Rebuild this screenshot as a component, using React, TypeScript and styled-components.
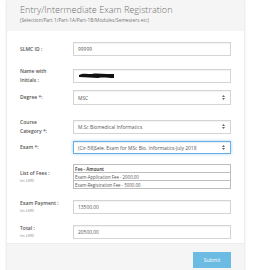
import React from "react";
import styled, { createGlobalStyle } from "styled-components";

const Global = createGlobalStyle`
  html, body { margin: 0; padding: 0; background: #ffffff; }
  body { font-family: "Open Sans", "Liberation Sans", sans-serif; overflow: hidden; }
  * { box-sizing: border-box; }
`;

const Card = styled.div`
  margin-left: 7px;
  width: 237px;
  height: 280px;
  background: #fff;
  box-shadow: 0 0 3px rgba(0, 0, 0, 0.18);
  display: flex;
  flex-direction: column;
`;

const Header = styled.div`
  background: #f5f5f5;
  height: 31px;
  padding: 4px 13px 0 13px;
`;

const Title = styled.div`
  font-size: 9.1px;
  font-weight: 300;
  color: #6f6f6f;
  line-height: 12px;
  white-space: nowrap;
`;

const Subtitle = styled.div`
  font-size: 4.8px;
  color: #777;
  line-height: 7px;
  margin-top: 1px;
  white-space: nowrap;
`;

const Body = styled.div`
  padding: 11px 13px 5px 13px;
  display: flex;
  flex-direction: column;
`;

const Row = styled.div<{ $mt?: number; $h?: number }>`
  display: grid;
  grid-template-columns: 53px 158px;
  align-items: center;
  height: ${(p) => p.$h ?? 14}px;
  margin-top: ${(p) => p.$mt ?? 0}px;
`;

const Label = styled.div`
  font-size: 5px;
  font-weight: 600;
  color: #555;
  line-height: 8.5px;
`;

const Small = styled.div`
  font-size: 4px;
  font-weight: 400;
  color: #888;
  line-height: 6.5px;
`;

const Input = styled.div<{ $h?: number; $focus?: boolean }>`
  height: ${(p) => p.$h ?? 14}px;
  border: 1px solid ${(p) => (p.$focus ? "#66afe9" : "#d4d4d4")};
  box-shadow: ${(p) =>
    p.$focus
      ? "inset 0 1px 1px rgba(0,0,0,.075), 0 0 3px rgba(102,175,233,.6)"
      : "inset 0 1px 1px rgba(0,0,0,.05)"};
  display: flex;
  align-items: center;
  padding: 0 5px 0 4px;
  font-size: 4.9px;
  color: #555;
  white-space: nowrap;
`;

const Value = styled.span`
  flex: 1;
`;

const Arrow = styled.svg`
  width: 3px;
  height: 5px;
  flex: none;
`;

const Caret = () => (
  <Arrow viewBox="0 0 3 5">
    <path d="M1.5 0 L3 2 L0 2 Z M0 3 L3 3 L1.5 5 Z" fill="#666" />
  </Arrow>
);

const Table = styled.table`
  border-collapse: collapse;
  width: 158px;
  font-size: 4.4px;
  color: #555;
`;

const Cell = styled.td<{ $bold?: boolean }>`
  border: 1px solid #bdbdbd;
  height: 8px;
  padding: 0 1px;
  line-height: 6px;
  font-weight: ${(p) => (p.$bold ? 700 : 400)};
  white-space: nowrap;
`;

const Redacted = styled.svg`
  width: 37px;
  height: 7px;
`;

const Footer = styled.div`
  background: #f5f5f5;
  border-top: 1px solid #ececec;
  flex: 1;
  display: flex;
  justify-content: flex-end;
  padding: 8px 13px 0 13px;
`;

const Button = styled.div`
  width: 38px;
  height: 16px;
  background: #6bbbe2;
  color: #fff;
  font-size: 5px;
  display: flex;
  align-items: center;
  justify-content: center;
`;

export default function App() {
  return (
    <>
      <Global />
      <Card>
        <Header>
          <Title>Entry/Intermediate Exam Registration</Title>
          <Subtitle>(Selection/Part 1/Part-1A/Part-1B/Modules/Semesters etc)</Subtitle>
        </Header>
        <Body>
          <Row>
            <Label>SLMC ID :</Label>
            <Input>
              <Value>99999</Value>
            </Input>
          </Row>
          <Row $mt={11}>
            <Label>
              Name with
              <br />
              Initials :
            </Label>
            <Input>
              <Redacted viewBox="0 0 37 7">
                <path
                  d="M1 3 C4 1 10 2 14 2 C18 1 24 2 29 2 L36 2 L36 6 C30 6 25 5 20 6 C14 6 8 5 1 5 Z"
                  fill="#111"
                />
              </Redacted>
            </Input>
          </Row>
          <Row $mt={9} $h={15}>
            <Label>Degree *:</Label>
            <Input $h={15}>
              <Value>MSC</Value>
              <Caret />
            </Input>
          </Row>
          <Row $mt={13}>
            <Label>
              Course
              <br />
              Category *:
            </Label>
            <Input>
              <Value>M.Sc Biomedical Informatics</Value>
              <Caret />
            </Input>
          </Row>
          <Row $mt={9} $h={13}>
            <Label>Exam *:</Label>
            <Input $h={13} $focus>
              <Value>(Cir-58)Sele. Exam for MSc Bio. Informatics-July 2018</Value>
              <Caret />
            </Input>
          </Row>
          <Row $mt={10} $h={24}>
            <div>
              <Label>List of Fees :</Label>
              <Small>(in LKR)</Small>
            </div>
            <Table>
              <tbody>
                <tr>
                  <Cell $bold>Fee - Amount</Cell>
                </tr>
                <tr>
                  <Cell>Exam-Application Fee - 2000.00</Cell>
                </tr>
                <tr>
                  <Cell>Exam-Registration Fee - 5000.00</Cell>
                </tr>
              </tbody>
            </Table>
          </Row>
          <Row $mt={11}>
            <div>
              <Label>Exam Payment :</Label>
              <Small>(in LKR)</Small>
            </div>
            <Input>
              <Value>13500.00</Value>
            </Input>
          </Row>
          <Row $mt={11}>
            <div>
              <Label>Total :</Label>
              <Small>(in LKR)</Small>
            </div>
            <Input>
              <Value>20500.00</Value>
            </Input>
          </Row>
        </Body>
        <Footer>
          <Button>Submit</Button>
        </Footer>
      </Card>
    </>
  );
}
